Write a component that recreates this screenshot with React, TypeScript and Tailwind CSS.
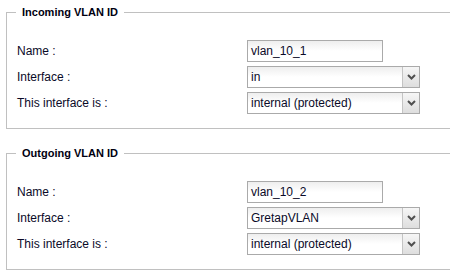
import React from 'react';

interface VlanGroup {
    title: string;
    name: string;
    iface: string;
    kind: string;
}

const groups: VlanGroup[] = [
    { title: 'Incoming VLAN ID', name: 'vlan_10_1', iface: 'in', kind: 'internal (protected)' },
    { title: 'Outgoing VLAN ID', name: 'vlan_10_2', iface: 'GretapVLAN', kind: 'internal (protected)' },
];

const FakeSelect: React.FC<{ value: string }> = ({ value }) => (
    <div className="flex h-[22px] w-[173px] border border-[#aaaaaa] bg-gradient-to-b from-[#eeeeee] via-white to-white">
        <div className="flex-1 pl-[3px] leading-[20px]">{value}</div>
        <div className="flex w-[17px] items-center justify-center border-l border-[#c4c4c4] bg-gradient-to-b from-[#f6f6f6] to-[#dedede]">
            <svg width="9" height="6" viewBox="0 0 9 6">
                <path d="M1 1 L4.5 4.5 L8 1" fill="none" stroke="#505050" strokeWidth="2" />
            </svg>
        </div>
    </div>
);

const Row: React.FC<{ label: string; children: React.ReactNode }> = ({ label, children }) => (
    <div className="flex h-[22px] items-center">
        <div className="w-[230px]">{label}</div>
        {children}
    </div>
);

export default function App() {
    return (
        <div className="h-[280px] w-[450px] overflow-hidden bg-white pt-[12px] pl-[6px] font-['Liberation_Sans',Arial,sans-serif] text-[12px] text-[#0a0a28]">
            {groups.map((g, i) => (
                <div
                    key={g.title}
                    className={`relative w-[470px] border border-[#c0c0c0] pt-[27px] pb-[14px] pl-[10px] ${i > 0 ? 'mt-[24px]' : ''}`}
                >
                    {/* legend */}
                    <span className="absolute -top-[7px] left-[9px] bg-white px-[6px] text-[11px] leading-[13px] font-bold text-[#000010]">
                        {g.title}
                    </span>
                    <div className="flex flex-col gap-[4px]">
                        <Row label="Name :">
                            <div className="h-[22px] w-[136px] border border-[#aaaaaa] bg-gradient-to-b from-[#eeeeee] via-white to-white pl-[3px] leading-[20px]">
                                {g.name}
                            </div>
                        </Row>
                        <Row label="Interface :">
                            <FakeSelect value={g.iface} />
                        </Row>
                        <Row label="This interface is :">
                            <FakeSelect value={g.kind} />
                        </Row>
                    </div>
                </div>
            ))}
        </div>
    );
}
